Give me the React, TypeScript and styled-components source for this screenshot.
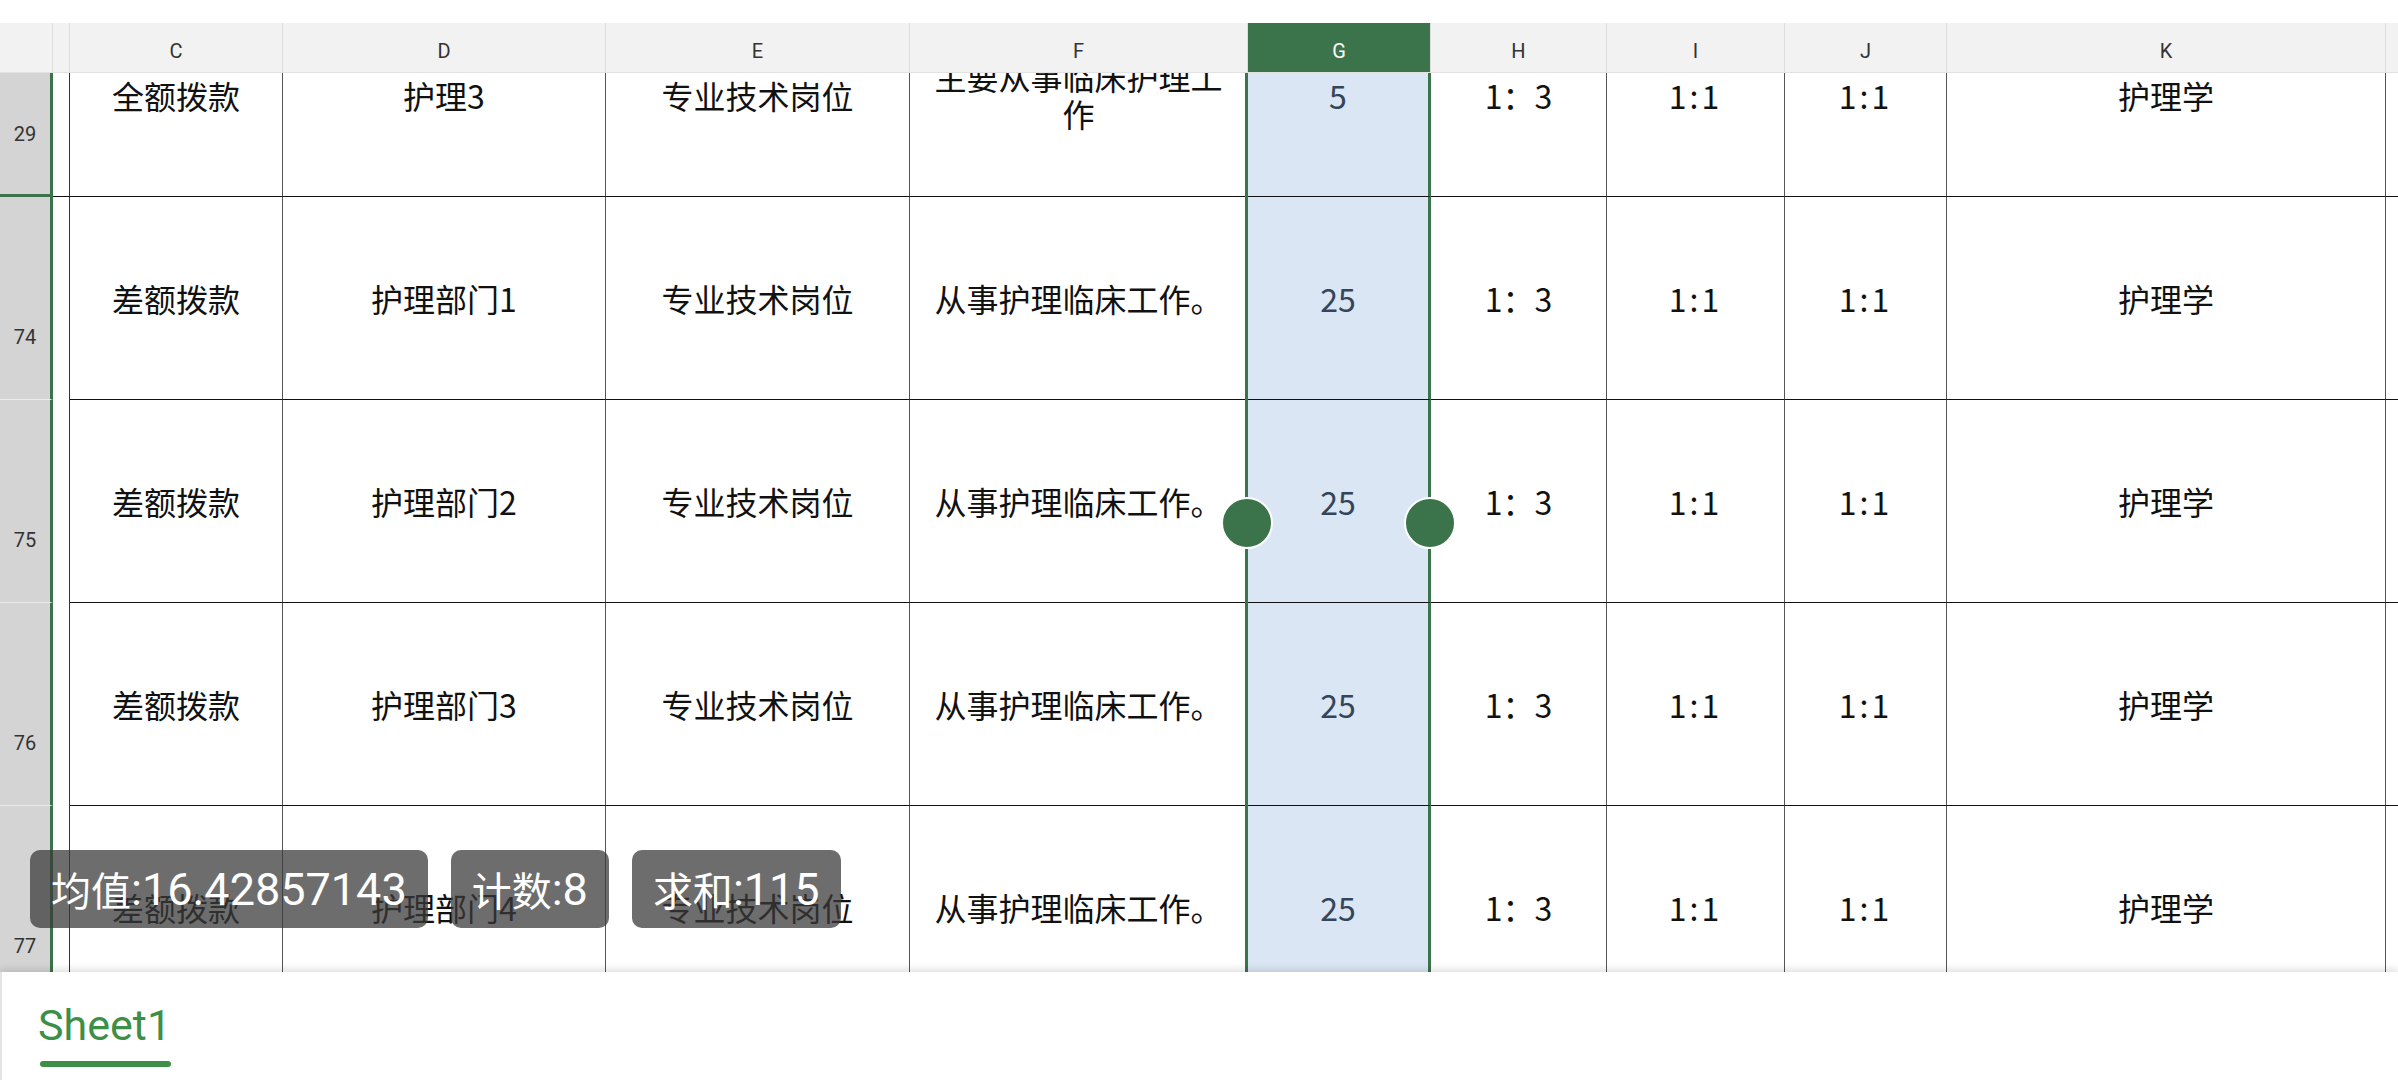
import React from "react";
import styled, { createGlobalStyle } from "styled-components";

const GREEN = "#3b744b";
const COLS =
  "53px 17px 213px 323px 304px 338px 183px 176px 178px 162px 439px 200px";

const Global = createGlobalStyle`
  html, body { margin: 0; padding: 0; width: 100%; height: 100%; overflow: hidden; background: #fff; }
  body { font-family: Roboto, "Noto Sans CJK SC", sans-serif; }
  #root { height: 100%; }
  * { box-sizing: border-box; }
`;

const Screen = styled.div`
  height: 1080px;
  display: flex;
  flex-direction: column;
  background: #fff;
`;

const TopStrip = styled.div`
  height: 23px;
  flex: none;
  background: #fff;
`;

const HeaderRow = styled.div`
  flex: none;
  height: 50px;
  display: grid;
  grid-template-columns: ${COLS};
  background: #f2f2f2;
  border-bottom: 1px solid #e2e2e2;
  overflow: hidden;
`;

const HeaderCell = styled.div<{ $selected?: boolean }>`
  display: flex;
  align-items: center;
  justify-content: center;
  padding-top: 6px;
  font-family: Roboto, sans-serif;
  font-size: 20px;
  color: ${(p) => (p.$selected ? "#ffffff" : "#333333")};
  background: ${(p) => (p.$selected ? GREEN : "transparent")};
  border-right: 1px solid #dddddd;
`;

const Body = styled.div`
  flex: 1;
  position: relative;
  overflow: hidden;
`;

const Rows = styled.div`
  margin-top: -79px;
`;

const Row = styled.div`
  display: grid;
  grid-template-columns: ${COLS};
  height: 203px;
`;

const RowHeader = styled.div<{ $strong?: boolean }>`
  background: #d4d4d4;
  border-right: 3px solid ${GREEN};
  border-bottom: ${(p) => (p.$strong ? `3px solid ${GREEN}` : "1px solid #ececec")};
  display: flex;
  justify-content: center;
  padding-top: 128px;
  font-family: Roboto, sans-serif;
  font-size: 20px;
  line-height: 24px;
  color: #333;
`;

const NarrowCol = styled.div<{ $strong?: boolean }>`
  border-right: 1px solid #333;
  border-bottom: ${(p) => (p.$strong ? "1px solid #111" : "none")};
`;

const Cell = styled.div<{ $selected?: boolean; $last?: boolean; $ratio?: boolean }>`
  display: flex;
  align-items: center;
  justify-content: center;
  text-align: center;
  padding: 0 12px;
  font-family: "Noto Sans CJK SC", sans-serif;
  font-size: 32px;
  line-height: 37px;
  letter-spacing: ${(p) => (p.$ratio ? "3px" : "0")};
  color: ${(p) => (p.$selected ? "#34455a" : "#111111")};
  background: ${(p) => (p.$selected ? "#dae6f3" : "#ffffff")};
  border-bottom: 1px solid #111;
  border-right: ${(p) =>
    p.$last ? "none" : p.$selected ? `3px solid ${GREEN}` : "1px solid #555"};
  box-shadow: ${(p) => (p.$selected ? `-3px 0 0 ${GREEN}` : "none")};
`;

const Handle = styled.div`
  position: absolute;
  top: 424px;
  width: 52px;
  height: 52px;
  border-radius: 50%;
  background: ${GREEN};
  border: 2px solid #ffffff;
`;

const Stats = styled.div`
  position: absolute;
  left: 30px;
  bottom: 44px;
  display: flex;
  gap: 23px;
`;

const Badge = styled.div`
  height: 78px;
  padding: 0 21px;
  border-radius: 10px;
  background: rgba(58, 58, 58, 0.74);
  color: #fff;
  display: flex;
  align-items: center;
  font-family: Roboto, sans-serif;
  font-size: 45px;
  white-space: nowrap;
`;

const BadgeKey = styled.span`
  font-family: "Noto Sans CJK SC", sans-serif;
  font-size: 40px;
`;

const Footer = styled.div`
  flex: none;
  height: 108px;
  background: #fff;
  position: relative;
  z-index: 2;
  box-shadow: 0 -3px 7px rgba(0, 0, 0, 0.12);
  border-left: 2px solid #e4e4e4;
  padding: 29px 0 0 36px;
`;

const Tab = styled.div`
  display: inline-flex;
  flex-direction: column;
  align-items: flex-start;
`;

const TabLabel = styled.span`
  font-family: Roboto, sans-serif;
  font-size: 43px;
  line-height: 48px;
  color: #3d8f47;
`;

const TabBar = styled.div`
  margin-top: 12px;
  margin-left: 2px;
  width: 131px;
  height: 6px;
  border-radius: 3px;
  background: #3d8f47;
`;

const letters = ["", "", "C", "D", "E", "F", "G", "H", "I", "J", "K", ""];

type RowData = { n: string; cells: string[] };

const rows: RowData[] = [
  {
    n: "29",
    cells: ["全额拨款", "护理3", "专业技术岗位", "主要从事临床护理工作", "5", "1：3", "1:1", "1:1", "护理学", ""],
  },
  ...[1, 2, 3, 4].map((i) => ({
    n: String(73 + i),
    cells: ["差额拨款", `护理部门${i}`, "专业技术岗位", "从事护理临床工作。", "25", "1：3", "1:1", "1:1", "护理学", ""],
  })),
];

export default function App() {
  return (
    <>
      <Global />
      <Screen>
        <TopStrip />
        <HeaderRow>
          {letters.map((l, i) => (
            <HeaderCell key={i} $selected={l === "G"}>
              {l}
            </HeaderCell>
          ))}
        </HeaderRow>
        <Body>
          <Rows>
            {rows.map((r, ri) => (
              <Row key={r.n}>
                <RowHeader $strong={ri === 0}>{r.n}</RowHeader>
                <NarrowCol $strong={ri === 0} />
                {r.cells.map((c, ci) => (
                  <Cell
                    key={ci}
                    $selected={ci === 4}
                    $ratio={c === "1:1"}
                    $last={ci === r.cells.length - 1}
                  >
                    {c}
                  </Cell>
                ))}
              </Row>
            ))}
          </Rows>
          <Handle style={{ left: 1221 }} />
          <Handle style={{ left: 1404 }} />
          <Stats>
            <Badge>
              <BadgeKey>均值</BadgeKey>:16.42857143
            </Badge>
            <Badge>
              <BadgeKey>计数</BadgeKey>:8
            </Badge>
            <Badge>
              <BadgeKey>求和</BadgeKey>:115
            </Badge>
          </Stats>
        </Body>
        <Footer>
          <Tab>
            <TabLabel>Sheet1</TabLabel>
            <TabBar />
          </Tab>
        </Footer>
      </Screen>
    </>
  );
}
